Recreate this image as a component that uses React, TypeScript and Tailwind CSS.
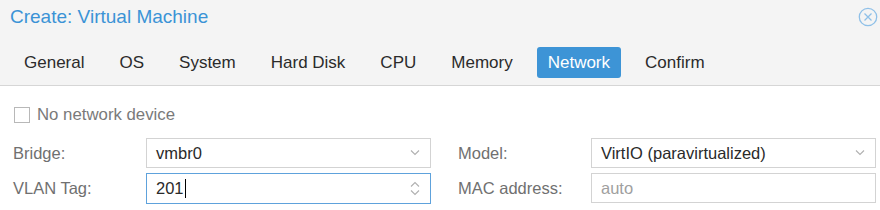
import React from 'react';

const tabs = ['General', 'OS', 'System', 'Hard Disk', 'CPU', 'Memory', 'Network', 'Confirm'];

function Chevron({ up = false }: { up?: boolean }) {
    return (
        <svg width="10" height="6" viewBox="0 0 10 6" className="block">
            <path
                d={up ? 'M1 5.5 L5 1.5 L9 5.5' : 'M1 0.5 L5 4.5 L9 0.5'}
                fill="none"
                stroke="#b0b0b0"
                strokeWidth="1.1"
            />
        </svg>
    );
}

function Field({ label, children }: { label: string; children: React.ReactNode }) {
    return (
        <div className="flex h-[30px] items-center">
            <div className="w-[133px] shrink-0 text-[16.5px] text-[#707070]">{label}</div>
            {children}
        </div>
    );
}

export default function App(): React.ReactElement {
    return (
        <div className="h-[210px] w-[880px] overflow-hidden bg-white" style={{ fontFamily: '"Liberation Sans", Arial, sans-serif' }}>
            {/* Header */}
            <div className="border-b border-[#d6d6d6] bg-[#f4f4f4]">
                <div className="flex h-[34px] items-center justify-between pl-[10px] pr-[2px]">
                    <span className="text-[19px] text-[#3b93d6]">Create: Virtual Machine</span>
                    <svg width="20" height="20" viewBox="0 0 20 20">
                        <circle cx="10" cy="10" r="8.7" fill="none" stroke="#8fc0e8" strokeWidth="1.3" />
                        <path d="M6.5 6.5 L13.5 13.5 M13.5 6.5 L6.5 13.5" stroke="#8fc0e8" strokeWidth="1.3" />
                    </svg>
                </div>
                <div className="flex gap-[13px] pb-[7px] pl-[13px] pt-[13px]">
                    {tabs.map((t) => (
                        <div
                            key={t}
                            className={
                                t === 'Network'
                                    ? 'flex h-[31px] items-center rounded-[3px] bg-[#3d94d6] px-[11px] text-[17px] text-white'
                                    : 'flex h-[31px] items-center px-[11px] text-[17px] text-[#2b2b2b]'
                            }
                        >
                            {t}
                        </div>
                    ))}
                </div>
            </div>

            {/* Body */}
            <div className="pl-[13px] pr-[4px] pt-[19px]">
                <div className="flex h-[20px] items-center gap-[7px] pl-px">
                    <span className="h-[16px] w-[16px] border border-[#b8b8b8] bg-white" />
                    <span className="text-[16.8px] text-[#7a7a7a]">No network device</span>
                </div>

                <div className="mt-[13px] grid grid-cols-2 gap-x-[27px] gap-y-[5px]">
                    <Field label="Bridge:">
                        <div className="flex h-[30px] flex-1 items-center justify-between border border-[#d3d3d3] pl-[9px] pr-[10px]">
                            <span className="text-[16.5px] text-[#2a2a2a]">vmbr0</span>
                            <Chevron />
                        </div>
                    </Field>
                    <Field label="Model:">
                        <div className="flex h-[30px] flex-1 items-center justify-between border border-[#d3d3d3] pl-[9px] pr-[10px]">
                            <span className="text-[16.5px] text-[#2a2a2a]">VirtIO (paravirtualized)</span>
                            <Chevron />
                        </div>
                    </Field>
                    <Field label="VLAN Tag:">
                        <div className="flex h-[31px] flex-1 items-center justify-between border border-[#5ea2dc] pl-[9px] pr-[10px]">
                            <span className="flex items-center text-[16.5px] text-[#2a2a2a]">
                                201
                                <span className="ml-px inline-block h-[19px] w-px bg-black" />
                            </span>
                            <div className="flex flex-col gap-[3px]">
                                <Chevron up />
                                <Chevron />
                            </div>
                        </div>
                    </Field>
                    <Field label="MAC address:">
                        <div className="flex h-[30px] flex-1 items-center border border-[#d3d3d3] pl-[9px]">
                            <span className="text-[16.5px] text-[#a0a0a0]">auto</span>
                        </div>
                    </Field>
                </div>
            </div>
        </div>
    );
}
